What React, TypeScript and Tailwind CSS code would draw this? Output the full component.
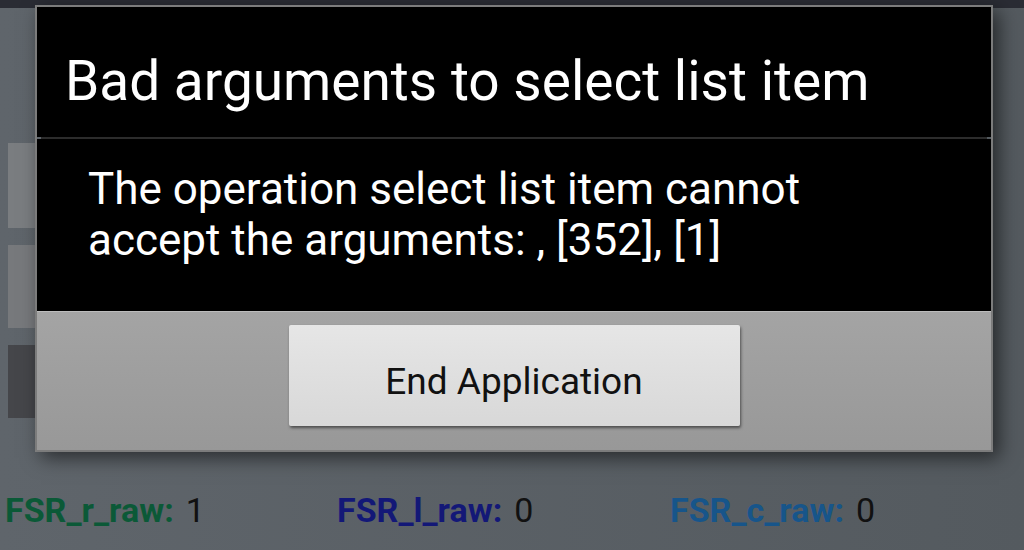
export default function App() {
  return (
    <div className="relative w-[1024px] h-[550px] overflow-hidden bg-gradient-to-r from-[#5f656b] to-[#545a5f] font-['Roboto',sans-serif]">
      {/* Underlying app, dimmed */}
      <div className="flex flex-col h-full">
        <div className="h-[8px] bg-[#2a2c34]" />
        <div className="flex flex-col gap-[17px] pl-[8px] pt-[135px]">
          <div className="w-[40px] h-[85px] bg-[#7a7d80]" />
          <div className="w-[40px] h-[83px] bg-[#77797c]" />
          <div className="w-[40px] h-[73px] bg-[#45464a]" />
        </div>
        <div className="flex items-center mt-[75px] text-[34px] leading-none">
          <div className="w-[337px] pl-[5px]">
            <span className="font-bold text-[#0b5937]">FSR_r_raw:</span>
            <span className="text-[#111] ml-[12px]">1</span>
          </div>
          <div className="w-[333px]">
            <span className="font-bold text-[#131877]">FSR_l_raw:</span>
            <span className="text-[#111] ml-[12px]">0</span>
          </div>
          <div>
            <span className="font-bold text-[#17558a]">FSR_c_raw:</span>
            <span className="text-[#111] ml-[12px]">0</span>
          </div>
        </div>
      </div>

      {/* Error dialog */}
      <div className="absolute left-[35px] top-[5px] w-[958px] h-[447px] flex flex-col border-2 border-[#7c7c7c] shadow-[6px_6px_18px_rgba(0,0,0,0.55)]">
        <div className="h-[130px] bg-black flex items-center pl-[28px] pt-[18px] text-white text-[55px] leading-none">
          Bad arguments to select list item
        </div>
        <div className="h-[2px] bg-[#2c2c2c] mx-[4px]" />
        <div className="h-[172px] bg-black pl-[51px] pt-[25px] text-white text-[44px] leading-[51px]">
          The operation select list item cannot
          <br />
          accept the arguments: , [352], [1]
        </div>
        <div className="flex-1 flex justify-center items-start pt-[13px] bg-gradient-to-b from-[#a4a4a4] to-[#989898] border-t border-[#bcbcbc]">
          <button className="w-[451px] h-[101px] pt-[12px] bg-gradient-to-b from-[#e6e6e6] to-[#d8d8d8] rounded-[2px] shadow-[1px_2px_3px_rgba(0,0,0,0.5)] text-[#111] text-[37px]">
            End Application
          </button>
        </div>
      </div>
    </div>
  );
}
